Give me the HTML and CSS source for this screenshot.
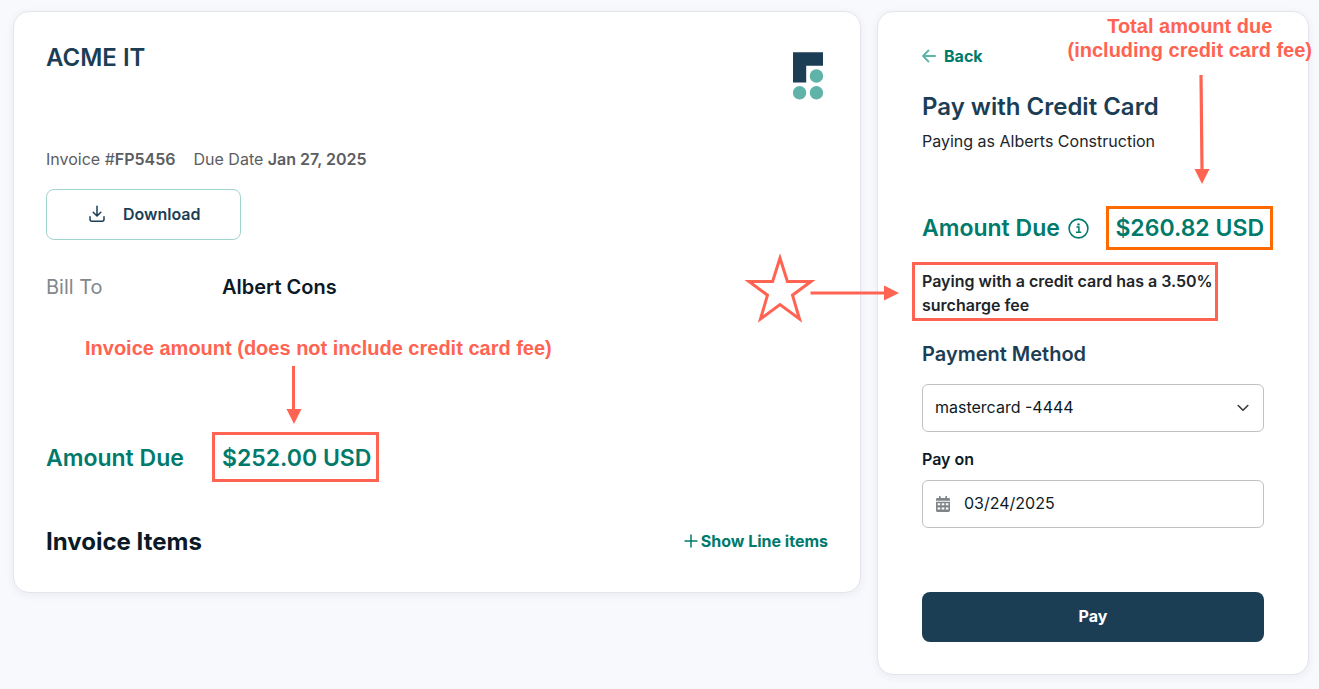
FILE: index.html
```html
<!DOCTYPE html>
<html lang="en">
<head>
<meta charset="utf-8">
<meta name="viewport" content="width=device-width, initial-scale=1">
<title>Invoice FP5456</title>
<link rel="stylesheet" href="styles.css">
</head>
<body>
<main class="page">
  <section class="card invoice">
    <header class="invoice-header">
      <h1 class="heading">ACME IT</h1>
      <svg class="logo" width="30" height="48" viewBox="0 0 30 48" role="img" aria-label="ACME IT logo">
        <path fill="#1c3e55" d="M0 .3h30v13.4H13.2v16.8H0z"/>
        <g fill="#5fb3a8"><circle cx="23.4" cy="24" r="6.7"/><circle cx="6.6" cy="40.8" r="6.7"/><circle cx="23.4" cy="40.8" r="6.7"/></g>
      </svg>
    </header>
    <p class="meta"><span>Invoice #<b>FP5456</b></span><span>Due Date <b>Jan 27, 2025</b></span></p>
    <button class="download" type="button">
      <svg width="16" height="18" viewBox="0 0 16 18" fill="none" stroke="#1c3e55" stroke-width="1.5" stroke-linecap="round" stroke-linejoin="round" aria-hidden="true"><path d="M8 1.2v9.6M4.2 7.2 8 11l3.8-3.8M1 11.8v2.4a2 2 0 0 0 2 2h10a2 2 0 0 0 2-2v-2.4"/></svg>
      Download
    </button>
    <dl class="row bill">
      <dt class="bill-label">Bill To</dt>
      <dd class="bill-name">Albert Cons</dd>
    </dl>
    <dl class="row amount">
      <dt>Amount Due</dt>
      <dd class="marked mark-invoice">$252.00 USD
        <svg class="arrow-invoice" width="16" height="58" viewBox="0 0 16 58" aria-hidden="true"><path d="M7.5 0v44" stroke="#ff6352" stroke-width="3"/><path fill="#ff6352" d="M.5 43h15L8 58z"/></svg>
      </dd>
      <dd class="note note-invoice">Invoice amount (does not include credit card fee)</dd>
    </dl>
    <div class="items">
      <h2 class="items-title">Invoice Items</h2>
      <button class="show-items" type="button">
        <svg width="14" height="14" viewBox="0 0 14 14" stroke="#007a6b" stroke-width="1.5" aria-hidden="true"><path d="M7 .5v13M.5 7h13"/></svg>
        Show Line items
      </button>
    </div>
  </section>

  <section class="card payment">
    <a class="back" href="#">
      <svg width="14" height="14" viewBox="0 0 14 14" fill="none" stroke="#5bb5a9" stroke-width="1.8" stroke-linecap="round" stroke-linejoin="round" aria-hidden="true"><path d="M13.2 7H1M6.4 1.500 1 7l5.400 5.500"/></svg>
      Back
    </a>
    <h2 class="heading pay-title">Pay with Credit Card</h2>
    <p class="paying-as">Paying as Alberts Construction</p>
    <div class="total amount">
      <span class="total-label">Amount Due
        <svg width="21" height="21" viewBox="0 0 21 21" fill="none" stroke="#007a6b" aria-hidden="true"><circle cx="10.5" cy="10.5" r="9.4" stroke-width="1.6"/><path d="M8.4 9h2.5v5M8 14.2h5.2" stroke-width="1.5"/><circle cx="10.5" cy="6.4" r="1.2" fill="#007a6b" stroke="none"/></svg>
      </span>
      <span class="marked mark-total">$260.82 USD</span>
      <svg class="arrow-total" width="16" height="109" viewBox="0 0 16 109" aria-hidden="true"><path d="M7 0l1 95" stroke="#ff6352" stroke-width="3.2"/><path fill="#ff6352" d="M.5 94h15L8 109z"/></svg>
    </div>
    <p class="surcharge marked mark-surcharge">Paying with a credit card has a 3.50% surcharge fee
      <svg class="star" width="156" height="70" viewBox="0 0 156 70" fill="none" aria-hidden="true"><path d="M36 4 43.400 27.500H67L48.500 41.200 55.500 65 36 50.600 16.500 65 23.500 41.200 5 27.500H28.600z" stroke="#ff6352" stroke-width="3"/><path d="M66.500 39H142" stroke="#ff6352" stroke-width="3"/><path fill="#ff6352" d="M140 31.500v15L155 39z"/></svg>
    </p>
    <form class="form">
      <label class="method-label" for="method">Payment Method</label>
      <div class="control">
        <select class="field" id="method"><option>mastercard -4444</option></select>
        <svg class="chevron" width="12" height="8" viewBox="0 0 12 8" fill="none" stroke="#343a40" stroke-width="1.6" stroke-linecap="round" stroke-linejoin="round" aria-hidden="true"><path d="m1.200 1.500 4.800 4.800 4.800-4.800"/></svg>
      </div>
      <label class="date-label" for="date">Pay on</label>
      <div class="control">
        <input class="field field-date" id="date" type="text" value="03/24/2025">
        <svg class="calendar" width="14" height="16" viewBox="0 0 14 16" aria-hidden="true"><path fill="#7f8487" fill-rule="evenodd" d="M3 0h1.600v2h4.800V0H11v2h1.600Q14 2 14 3.400V4.800H0V3.400Q0 2 1.400 2H3zM0 5.800h14v8.800q0 1.400-1.400 1.400H1.400Q0 16 0 14.600zM1.600 7.300v2h2.600v-2zM5.700 7.300v2h2.600v-2zM9.800 7.300v2h2.600v-2zM1.600 11.500v2h2.600v-2zM5.700 11.500v2h2.600v-2zM9.800 11.500v2h2.600v-2z"/></svg>
      </div>
      <button class="pay" type="submit">Pay</button>
    </form>
    <p class="note note-total">Total amount due<br>(including credit card fee)</p>
  </section>
</main>
</body>
</html>
```
FILE: styles.css
```css
*, *::after { box-sizing: border-box; }
body {
  margin: 0;
  background: #f8f9fd;
  color: #212529;
  font: 16px/24px Inter, "Liberation Sans", sans-serif;
}
h1, h2, p, dl, dd { margin: 0; }
button { font: inherit; cursor: pointer; }
svg { flex: none; }
.page {
  display: grid;
  grid-template-columns: minmax(0, 53fr) minmax(0, 27fr);
  align-items: start;
  gap: 16px;
  padding: 11px 10px 14px 13px;
}
.card {
  position: relative;
  display: flex;
  flex-direction: column;
  background: #fff;
  border: 1px solid #e2e5ea;
  border-radius: 16px;
  box-shadow: 0 2px 8px rgba(28, 62, 85, 0.07);
}
.invoice { padding: 30px 32px 34px; }
.payment { padding: 32px 44px; }
.heading {
  font-size: 24px;
  line-height: 32px;
  font-weight: 600;
  color: #1c3e55;
}

.invoice-header {
  display: flex;
  justify-content: space-between;
  padding-right: 5px;
}
.logo { margin-top: 10px; }
.meta {
  display: flex;
  gap: 18px;
  margin-top: 47px;
  color: #5b5d61;
}
.meta b { font-weight: 600; }
.download {
  display: flex;
  align-items: center;
  align-self: flex-start;
  gap: 18px;
  margin-top: 18px;
  padding: 12px 39px 13px 42px;
  background: #fff;
  border: 1px solid #9fd5cd;
  border-radius: 8px;
  color: #1c3e55;
  font-weight: 600;
}
.row {
  display: grid;
  grid-template-columns: 176px max-content;
}
.bill {
  margin-top: 35px;
  font-size: 20px;
}
.bill-label { color: #83888d; }
.bill-name {
  color: #0b1a26;
  font-weight: 600;
}
.amount {
  position: relative;
  color: #007a6b;
  font-size: 23px;
  line-height: 32px;
  font-weight: 600;
}
.row.amount { margin-top: 143px; }
.items {
  display: flex;
  align-items: center;
  justify-content: space-between;
  margin-top: 52px;
}
.items-title {
  color: #0b1a26;
  font-size: 24px;
  line-height: 32px;
  font-weight: 700;
}
.show-items {
  display: flex;
  align-items: center;
  gap: 3px;
  padding: 0 0 2px;
  border: 0;
  background: none;
  color: #007a6b;
  font-weight: 700;
}

.back {
  display: flex;
  align-items: center;
  align-self: flex-start;
  gap: 8px;
  color: #007a6b;
  font-weight: 700;
  text-decoration: none;
}
.pay-title { margin-top: 23px; }
.paying-as { margin-top: 6px; }
.total {
  display: flex;
  justify-content: space-between;
  margin-top: 59px;
}
.total-label {
  display: flex;
  align-items: center;
  gap: 8px;
}
.surcharge {
  max-width: 300px;
  margin-top: 25px;
  font-weight: 600;
}
.form {
  display: flex;
  flex-direction: column;
  margin-top: 25px;
}
.method-label {
  color: #1c3e55;
  font-size: 20px;
  font-weight: 600;
}
.date-label {
  margin-top: 15px;
  color: #0b1a26;
  font-weight: 600;
}
.control {
  position: relative;
  display: flex;
  margin-top: 9px;
}
.method-label + .control { margin-top: 18px; }
.field {
  width: 100%;
  height: 48px;
  padding: 0 12px 2px;
  border: 1px solid #bfc1c3;
  border-radius: 6px;
  background: #fff;
  color: #0b1a26;
  font: inherit;
  appearance: none;
}
.field-date { padding-left: 41px; }
.chevron {
  position: absolute;
  top: 20px;
  right: 15px;
}
.calendar {
  position: absolute;
  top: 16px;
  left: 14px;
}
.pay {
  margin-top: 64px;
  padding: 12px 16px 14px;
  border: 0;
  border-radius: 8px;
  background: #1c3e55;
  color: #fff;
  font-weight: 700;
}

/* Callouts drawn over the cards */
.marked { position: relative; }
.marked::after {
  content: "";
  position: absolute;
  border: 3px solid #ff6352;
}
.mark-invoice::after { inset: -10px -8px -8px -10px; }
.mark-total::after {
  inset: -6px -9px -6px -9px;
  border-color: #ff6a00;
}
.mark-surcharge::after { inset: -7px 4px -4px -10px; }
.note {
  position: absolute;
  color: #ff6352;
  font: bold 20px/24px "Liberation Sans", Arial, sans-serif;
  white-space: nowrap;
}
.note-invoice { left: 39px; top: -106px; }
.note-total {
  top: 2px;
  right: -4px;
  text-align: center;
}
.arrow-invoice {
  position: absolute;
  left: 64px;
  top: -76px;
}
.arrow-total {
  position: absolute;
  right: 54px;
  top: -137px;
}
.star {
  position: absolute;
  left: -178px;
  top: -15px;
  z-index: 1;
}
```
